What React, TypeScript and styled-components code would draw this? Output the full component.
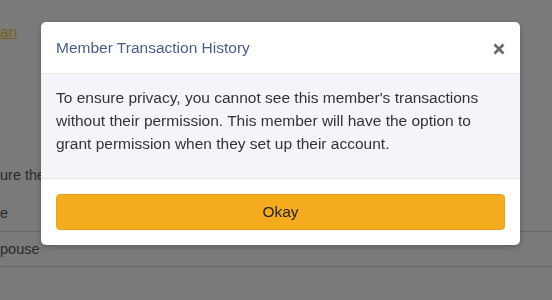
import React from "react";
import styled, { createGlobalStyle } from "styled-components";

const Global = createGlobalStyle`
  html, body { margin: 0; padding: 0; background: #ffffff; }
  body { font-family: "Liberation Sans", Arial, sans-serif; overflow: hidden; }
  * { box-sizing: border-box; }
`;

const Page = styled.div`
  width: 552px;
  height: 300px;
  display: flex;
  flex-direction: column;
  padding-top: 21px;
  color: #575757;
  font-size: 14.5px;
`;

const BackLink = styled.a`
  display: block;
  height: 22px;
  line-height: 22px;
  font-size: 15.5px;
  color: #f7c93a;
  text-decoration: underline;
`;

const Caption = styled.div`
  margin-top: 121px;
  height: 22px;
  line-height: 22px;
`;

const Row = styled.div<{ $h: number; $pt?: number }>`
  height: ${(p) => p.$h}px;
  padding-top: ${(p) => p.$pt ?? 0}px;
  display: flex;
  align-items: center;
  border-bottom: 1px solid #dcdcdc;
`;

const Overlay = styled.div`
  position: fixed;
  inset: 0;
  background: rgba(0, 0, 0, 0.52);
  padding: 22px 0 0 41px;
`;

const Modal = styled.div`
  width: 479px;
  background: #ffffff;
  border-radius: 5px;
  overflow: hidden;
  box-shadow: 0 2px 6px rgba(0, 0, 0, 0.25);
`;

const Header = styled.div`
  height: 52px;
  display: flex;
  align-items: center;
  justify-content: space-between;
  padding: 0 14px 0 15px;
  border-bottom: 1px solid #e9eaf0;
`;

const Title = styled.h4`
  margin: 0;
  font-size: 15.5px;
  font-weight: 400;
  color: #4a5d8e;
`;

const Close = styled.button`
  border: 0;
  background: transparent;
  padding: 0;
  width: 14px;
  height: 14px;
  display: flex;
  align-items: center;
  justify-content: center;
  margin-top: 2px;
`;

const Body = styled.div`
  background: #f4f5fa;
  padding: 12px 15px 23px 15px;
  font-size: 15.5px;
  line-height: 23px;
  color: #333333;
  height: 104px;
`;

const Footer = styled.div`
  padding: 15px;
  border-top: 1px solid #e6e7ec;
`;

const Button = styled.button`
  width: 100%;
  height: 36px;
  border: 1px solid #e9a11b;
  border-radius: 4px;
  background: #f4ab1e;
  color: #222222;
  font-family: "Liberation Sans", Arial, sans-serif;
  font-size: 15.5px;
`;

export default function App() {
  return (
    <>
      <Global />
      <Page>
        <BackLink>an</BackLink>
        <Caption>ure the</Caption>
        <Row $h={46} $pt={8}>e</Row>
        <Row $h={35}>pouse</Row>
      </Page>
      <Overlay>
        <Modal>
          <Header>
            <Title>Member Transaction History</Title>
            <Close aria-label="Close">
              <svg width="12" height="12" viewBox="0 0 12 12">
                <path d="M1.5 1.5 L10.5 10.5 M10.5 1.5 L1.5 10.5" stroke="#6a6a6a" strokeWidth="2.8" strokeLinecap="butt" />
              </svg>
            </Close>
          </Header>
          <Body>
            To ensure privacy, you cannot see this member's transactions without their permission. This member will have the option to grant permission when they set up their account.
          </Body>
          <Footer>
            <Button>Okay</Button>
          </Footer>
        </Modal>
      </Overlay>
    </>
  );
}
